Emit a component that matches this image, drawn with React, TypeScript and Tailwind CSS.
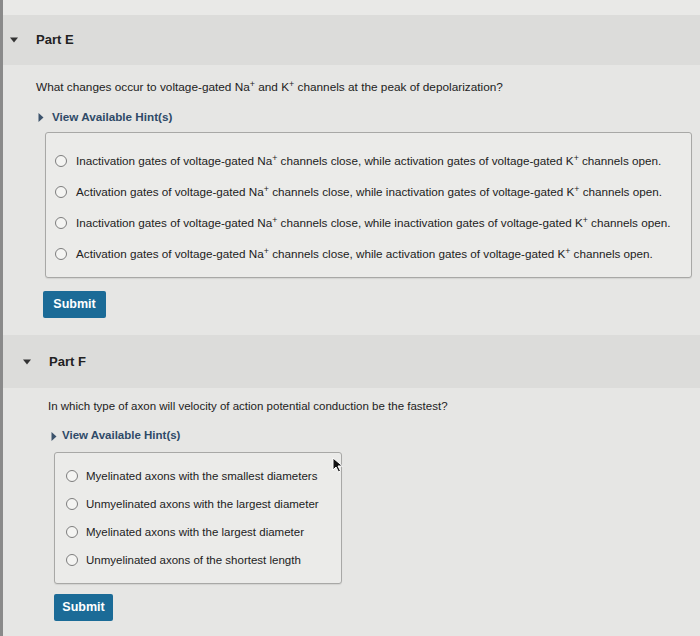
import React from 'react';

type Part = {
  label: string;
  question: React.ReactNode;
  options: React.ReactNode[];
};

const Na = () => (
  <>
    Na<sup>+</sup>
  </>
);
const K = () => (
  <>
    K<sup>+</sup>
  </>
);

const partE: Part = {
  label: 'Part E',
  question: (
    <>
      What changes occur to voltage-gated <Na /> and <K /> channels at the peak of depolarization?
    </>
  ),
  options: [
    <>
      Inactivation gates of voltage-gated <Na /> channels close, while activation gates of voltage-gated <K /> channels open.
    </>,
    <>
      Activation gates of voltage-gated <Na /> channels close, while inactivation gates of voltage-gated <K /> channels open.
    </>,
    <>
      Inactivation gates of voltage-gated <Na /> channels close, while inactivation gates of voltage-gated <K /> channels open.
    </>,
    <>
      Activation gates of voltage-gated <Na /> channels close, while activation gates of voltage-gated <K /> channels open.
    </>,
  ],
};

const partF: Part = {
  label: 'Part F',
  question: 'In which type of axon will velocity of action potential conduction be the fastest?',
  options: [
    'Myelinated axons with the smallest diameters',
    'Unmyelinated axons with the largest diameter',
    'Myelinated axons with the largest diameter',
    'Unmyelinated axons of the shortest length',
  ],
};

const DownCaret = () => (
  <svg width="8" height="6" viewBox="0 0 8 6" className="shrink-0">
    <path d="M0 0.5 L8 0.5 L4 5.5 Z" fill="#333" />
  </svg>
);

const RightCaret = () => (
  <svg width="6" height="9" viewBox="0 0 6 9" className="shrink-0">
    <path d="M0.5 0 L5.5 4.5 L0.5 9 Z" fill="#3c536c" />
  </svg>
);

const Radio = () => (
  <span className="w-[12px] h-[12px] rounded-full border border-[#7d7d7d] bg-[#f4f4f2] shrink-0" />
);

const Cursor = () => (
  <svg width="12" height="16" viewBox="0 0 12 16" className="absolute left-[329px] top-[457px]">
    <path d="M1 1 L1 13 L4 10 L6.5 15 L8.5 14 L6 9 L10.5 9 Z" fill="#111" stroke="#fff" strokeWidth="1" />
  </svg>
);

const App: React.FC = () => {
  return (
    <div className="relative w-[700px] h-[636px] overflow-hidden bg-[#e6e6e4] border-l-[3px] border-[#8a8a8a] font-['Liberation_Sans',Arial,sans-serif] text-[#222]">
      {/* top strip */}
      <div className="h-[15px] bg-[#e9e9e7]" />

      {/* Part E */}
      <div className="h-[50px] bg-[#dcdcda] flex items-center pl-[7px]">
        <DownCaret />
        <span className="ml-[18px] text-[13px] font-bold">{partE.label}</span>
      </div>
      <div className="pl-[33px]">
        <p className="mt-[14px] h-[16px] leading-[16px] text-[11.8px]">{partE.question}</p>
        <button className="mt-[14px] h-[16px] flex items-center gap-[8px] pl-[2px] text-[11.7px] font-bold text-[#2f4a68]">
          <RightCaret />
          View Available Hint(s)
        </button>
        <div className="mt-[7px] ml-[9px] w-[647px] rounded-[3px] border border-[#a8a8a6] bg-[#ebebe9] shadow-[0_1px_1px_rgba(0,0,0,0.08)] pt-[20px] pb-[15px] pl-[9px] flex flex-col gap-[15px]">
          {partE.options.map((o, i) => (
            <label key={i} className="h-[16px] flex items-center gap-[9px] text-[11.7px] leading-[16px]">
              <Radio />
              <span>{o}</span>
            </label>
          ))}
        </div>
        <button className="mt-[13px] ml-[7px] w-[63px] h-[27px] rounded-[2px] bg-[#1b6b97] text-white text-[12.5px] font-bold">
          Submit
        </button>
      </div>

      {/* Part F */}
      <div className="mt-[17px] h-[53px] bg-[#dcdcda] flex items-center pl-[20px]">
        <DownCaret />
        <span className="ml-[18px] text-[13px] font-bold">{partF.label}</span>
      </div>
      <div className="pl-[45px]">
        <p className="mt-[10px] h-[16px] leading-[16px] text-[11.5px]">{partF.question}</p>
        <button className="mt-[14px] h-[16px] flex items-center gap-[5px] pl-[3px] text-[11.5px] font-bold text-[#2f4a68]">
          <RightCaret />
          View Available Hint(s)
        </button>
        <div className="mt-[8px] ml-[6px] w-[288px] rounded-[3px] border border-[#a8a8a6] bg-[#ebebe9] shadow-[0_1px_1px_rgba(0,0,0,0.08)] pt-[15px] pb-[15px] pl-[11px] flex flex-col gap-[12px]">
          {partF.options.map((o, i) => (
            <label key={i} className="h-[16px] flex items-center gap-[8px] text-[11.5px] leading-[16px]">
              <Radio />
              <span>{o}</span>
            </label>
          ))}
        </div>
        <button className="mt-[10px] ml-[6px] w-[59px] h-[27px] rounded-[2px] bg-[#1b6b97] text-white text-[12.5px] font-bold">
          Submit
        </button>
      </div>

      <Cursor />
    </div>
  );
};

export default App;
